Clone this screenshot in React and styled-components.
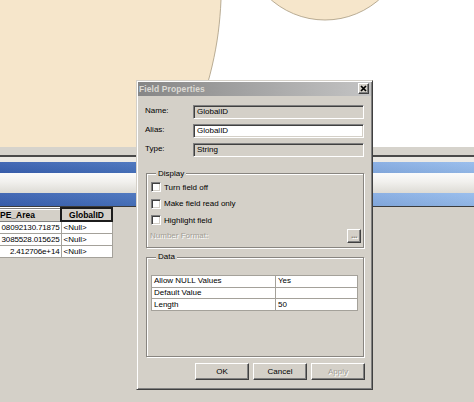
import styled, { createGlobalStyle } from 'styled-components';

const GlobalStyle = createGlobalStyle`
  html, body {
    margin: 0;
    padding: 0;
    background: #d4d0c8;
  }
  body {
    font-family: "Liberation Sans", Arial, sans-serif;
    color: #000;
  }
`;

const Screen = styled.div`
  position: relative;
  display: flex;
  flex-direction: column;
  width: 474px;
  height: 402px;
  overflow: hidden;
  background: #d4d0c8;
`;

const MapView = styled.div`
  flex: none;
  height: 147px;
  background: #fff;

  svg {
    display: block;
  }
`;

const Toolbar = styled.div`
  flex: none;
  height: 8px;
  background: #d6d3cc;
  border-bottom: 2px solid #4a4a4a;
`;

const Strip = styled.div`
  flex: none;
  height: 5px;
  background: #eceae5;
`;

const BlueBar = styled.div`
  flex: none;
  height: ${(p) => p.$h}px;
  background:
    linear-gradient(rgba(255, 255, 255, 0.06), rgba(0, 0, 0, 0.04)),
    linear-gradient(to right, #3960b0 0%, #4772bd 30%, #80a7df 72%, #95bbec 100%);
  border-bottom: ${(p) => (p.$edge ? '1px solid #3c3c3c' : 'none')};
`;

const GlossBar = styled.div`
  flex: none;
  height: 20px;
  background: linear-gradient(#fbfbfb 0%, #f1f0ed 45%, #dddbd5 100%);
`;

const GridArea = styled.div`
  flex: 1;
  background: #d4d0c8;
`;

const AttrTable = styled.table`
  border-collapse: collapse;
  table-layout: fixed;
  font-size: 8px;
  background: #fff;
`;

const HeadCell = styled.th`
  width: ${(p) => p.$w}px;
  height: 11px;
  padding: 0;
  background: #d4d0c8;
  font-size: 8.5px;
  font-weight: bold;
  text-align: ${(p) => p.$align || 'center'};
  white-space: nowrap;
  border: ${(p) => (p.$selected ? '2px solid #1c1c1c' : '1px solid #808080')};
  border-left: ${(p) => (p.$selected ? '2px solid #1c1c1c' : 'none')};
  box-shadow: ${(p) => (p.$selected ? 'none' : 'inset 0 1px #fff')};
`;

const Cell = styled.td`
  height: 11px;
  padding: ${(p) => (p.$num ? '0 1px 0 0' : '0 2px')};
  border: 1px solid #a4a19a;
  border-left: ${(p) => (p.$num ? 'none' : '1px solid #a4a19a')};
  text-align: ${(p) => (p.$num ? 'right' : 'left')};
  letter-spacing: ${(p) => (p.$num ? '-0.15px' : '0')};
  white-space: nowrap;
  line-height: 11px;
`;

/* dialog window floating over the app */
const Dialog = styled.div`
  position: absolute;
  left: 136px;
  top: 80px;
  width: 237px;
  height: 310px;
  box-sizing: border-box;
  padding: 1px;
  background: #d4d0c8;
  border: 1px solid;
  border-color: #d4d0c8 #404040 #404040 #d4d0c8;
  box-shadow: inset 1px 1px #fff, inset -1px -1px #808080;
  display: flex;
  flex-direction: column;
`;

const TitleBar = styled.div`
  display: flex;
  align-items: center;
  justify-content: space-between;
  height: 15px;
  padding: 0 2px 0 1px;
  background: linear-gradient(to right, #868686, #c4c4c4);
`;

const Title = styled.span`
  font-size: 8.5px;
  font-weight: bold;
  color: #dcdad4;
  letter-spacing: 0.1px;
`;

const CloseButton = styled.div`
  width: 9px;
  height: 9px;
  display: flex;
  align-items: center;
  justify-content: center;
  background: #d4d0c8;
  border: 1px solid;
  border-color: #fff #404040 #404040 #fff;
  box-shadow: inset -1px -1px #808080;
`;

const Body = styled.div`
  flex: 1;
  display: flex;
  flex-direction: column;
  padding: 9px 7px 8px 7px;
`;

const FieldRows = styled.div`
  display: flex;
  flex-direction: column;
  gap: 5px;
`;

const FieldRow = styled.div`
  display: grid;
  grid-template-columns: 48px 1fr;
  align-items: center;
  height: 14px;
  font-size: 8px;
`;

const FieldLabel = styled.span`
  margin-top: -2px;
`;

const TextBox = styled.div`
  height: 14px;
  box-sizing: border-box;
  padding: 0 3px;
  display: flex;
  align-items: center;
  background: ${(p) => (p.$editable ? '#fff' : '#d4d0c8')};
  border: 1px solid;
  border-color: #808080 #fff #fff #808080;
  box-shadow: inset 1px 1px #404040, inset -1px -1px #d4d0c8;
  font-size: 8px;
`;

const Group = styled.fieldset`
  margin: ${(p) => p.$top}px 0 0 1px;
  padding: ${(p) => p.$pad};
  min-width: 0;
  border: 1px solid #888580;
  box-shadow: inset 1px 1px #fff, 1px 1px #fff;
`;

const Legend = styled.legend`
  margin-left: 5px;
  padding: 0 2px;
  line-height: 10px;
  font-size: 8px;
  background: #d4d0c8;
`;

const CheckRow = styled.label`
  display: flex;
  align-items: center;
  gap: 3px;
  height: 16.5px;
  font-size: 8px;
`;

const CheckBox = styled.span`
  width: 10px;
  height: 10px;
  box-sizing: border-box;
  background: #fff;
  border: 1px solid;
  border-color: #808080 #fff #fff #808080;
  box-shadow: inset 1px 1px #404040, inset -1px -1px #d4d0c8;
`;

const FormatRow = styled.div`
  display: flex;
  align-items: center;
  justify-content: space-between;
  height: 15px;
  padding: 0 2px 0 0;
  margin-left: -1px;
`;

const Disabled = styled.span`
  font-size: 8px;
  color: #a29e96;
  text-shadow: 1px 1px #fff;
`;

const SmallButton = styled.div`
  width: 14px;
  height: 14px;
  box-sizing: border-box;
  display: flex;
  align-items: flex-end;
  justify-content: center;
  padding-bottom: 2px;
  font-size: 9px;
  font-weight: bold;
  line-height: 9px;
  letter-spacing: -0.5px;
  color: #8a867e;
  text-shadow: 1px 1px #fff;
  border: 1px solid;
  border-color: #fff #404040 #404040 #fff;
  box-shadow: inset -1px -1px #808080;
`;

const DataTable = styled.table`
  width: 100%;
  border-collapse: collapse;
  table-layout: fixed;
  background: #fff;
  font-size: 8px;
  border: 1px solid #8e8b85;
`;

const DataCell = styled.td`
  height: 10.7px;
  padding: 0 2px;
  border: 1px solid #a4a19a;
  width: ${(p) => p.$w || 'auto'};
  line-height: 10px;
  white-space: nowrap;
`;

const ButtonRow = styled.div`
  display: flex;
  justify-content: flex-end;
  gap: 4px;
  margin-top: 6px;
  margin-right: -1px;
`;

const PushButton = styled.div`
  width: 54px;
  height: 17px;
  box-sizing: border-box;
  display: flex;
  align-items: center;
  justify-content: center;
  font-size: 8px;
  color: ${(p) => (p.$disabled ? '#a29e96' : '#000')};
  text-shadow: ${(p) => (p.$disabled ? '1px 1px #fff' : 'none')};
  border: 1px solid;
  border-color: #fff #404040 #404040 #fff;
  box-shadow: inset -1px -1px #808080;
`;

const CloseIcon = () => (
  <svg width="7" height="7" viewBox="0 0 7 7">
    <path d="M1 1 L6 6 M6 1 L1 6" stroke="#000" strokeWidth="1.7" />
  </svg>
);

const MapDrawing = () => (
  <svg width="474" height="147" viewBox="0 0 474 147">
    <rect width="474" height="147" fill="#fff" />
    <path d="M0 0 H221 C219 45 211 82 186 147 H0 Z" fill="#f6e6cb" />
    <path d="M221 0 C219 45 211 82 186 147" fill="none" stroke="#a89a80" strokeWidth="0.8" />
    <circle cx="325" cy="-62" r="82" fill="#f6e6cb" stroke="#a89a80" strokeWidth="0.8" />
  </svg>
);

const rows = [
  ['08092130.71875', '<Null>'],
  ['3085528.015625', '<Null>'],
  ['2.412706e+14', '<Null>'],
];

const dataRows = [
  ['Allow NULL Values', 'Yes'],
  ['Default Value', ''],
  ['Length', '50'],
];

export default function App() {
  return (
    <>
      <GlobalStyle />
      <Screen>
        <MapView>
          <MapDrawing />
        </MapView>
        <Toolbar />
        <Strip />
        <BlueBar $h={11} />
        <GlossBar />
        <BlueBar $h={13} $edge />
        <GridArea>
          <AttrTable>
            <thead>
              <tr>
                <HeadCell $w={60} $align="left">PE_Area</HeadCell>
                <HeadCell $w={49} $selected>GlobalID</HeadCell>
              </tr>
            </thead>
            <tbody>
              {rows.map(([area, id], i) => (
                <tr key={i}>
                  <Cell $num>{area}</Cell>
                  <Cell>{id}</Cell>
                </tr>
              ))}
            </tbody>
          </AttrTable>
        </GridArea>

        <Dialog>
          <TitleBar>
            <Title>Field Properties</Title>
            <CloseButton>
              <CloseIcon />
            </CloseButton>
          </TitleBar>
          <Body>
            <FieldRows>
              <FieldRow>
                <FieldLabel>Name:</FieldLabel>
                <TextBox>GlobalID</TextBox>
              </FieldRow>
              <FieldRow>
                <FieldLabel>Alias:</FieldLabel>
                <TextBox $editable>GlobalID</TextBox>
              </FieldRow>
              <FieldRow>
                <FieldLabel>Type:</FieldLabel>
                <TextBox>String</TextBox>
              </FieldRow>
            </FieldRows>

            <Group $top={12} $pad="0 0 4px 4px">
              <Legend>Display</Legend>
              <CheckRow>
                <CheckBox />
                Turn field off
              </CheckRow>
              <CheckRow>
                <CheckBox />
                Make field read only
              </CheckRow>
              <CheckRow>
                <CheckBox />
                Highlight field
              </CheckRow>
              <FormatRow>
                <Disabled>Number Format:</Disabled>
                <SmallButton>...</SmallButton>
              </FormatRow>
            </Group>

            <Group $top={4} $pad="12.5px 5px 45px 4px">
              <Legend>Data</Legend>
              <DataTable>
                <tbody>
                  {dataRows.map(([k, v]) => (
                    <tr key={k}>
                      <DataCell $w="119px">{k}</DataCell>
                      <DataCell>{v}</DataCell>
                    </tr>
                  ))}
                </tbody>
              </DataTable>
            </Group>

            <ButtonRow>
              <PushButton>OK</PushButton>
              <PushButton>Cancel</PushButton>
              <PushButton $disabled>Apply</PushButton>
            </ButtonRow>
          </Body>
        </Dialog>
      </Screen>
    </>
  );
}
